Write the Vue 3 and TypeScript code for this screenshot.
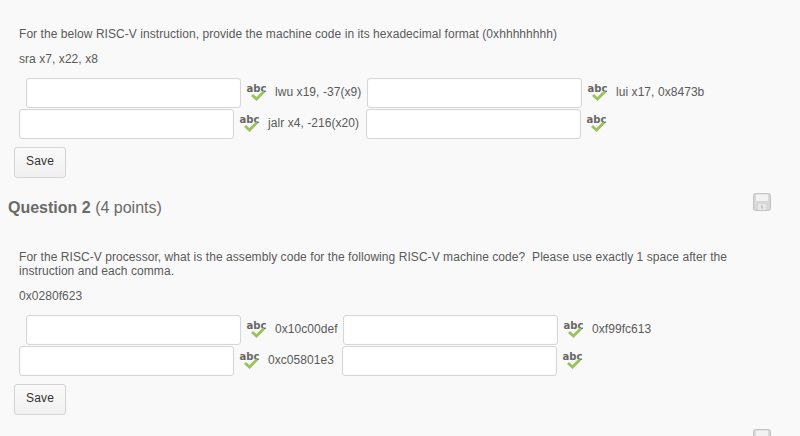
<script setup lang="ts">
interface Field {
  label?: string
  gap: number
}

interface Question {
  text: string[]
  code: string
  rows: { pad: number; fields: Field[] }[]
}

const questions: Question[] = [
  {
    text: ['For the below RISC-V instruction, provide the machine code in its hexadecimal format (0xhhhhhhhh)'],
    code: 'sra x7, x22, x8',
    rows: [
      { pad: 26, fields: [{ label: 'lwu x19, -37(x9)', gap: 92 }, { label: 'lui x17, 0x8473b', gap: 0 }] },
      { pad: 19, fields: [{ label: 'jalr x4, -216(x20)', gap: 98 }, { gap: 0 }] },
    ],
  },
  {
    text: [
      'For the RISC-V processor, what is the assembly code for the following RISC-V machine code?\u00a0 Please use exactly 1 space after the',
      'instruction and each comma.',
    ],
    code: '0x0280f623',
    rows: [
      { pad: 26, fields: [{ label: '0x10c00def', gap: 68 }, { label: '0xf99fc613', gap: 0 }] },
      { pad: 19, fields: [{ label: '0xc05801e3', gap: 74 }, { gap: 0 }] },
    ],
  },
]
</script>

<template>
  <div class="page">
    <template v-for="(q, i) in questions" :key="i">
      <section class="question">
        <p class="prompt">
          <span v-for="line in q.text" :key="line" class="line">{{ line }}</span>
        </p>
        <p class="code">{{ q.code }}</p>
        <div class="answers">
          <div v-for="(row, r) in q.rows" :key="r" class="row" :style="{ paddingLeft: `${row.pad}px` }">
            <div v-for="(f, k) in row.fields" :key="k" class="field" :style="{ width: f.gap ? `${f.gap + 249}px` : 'auto' }">
              <input class="box" type="text" />
              <svg class="abc" width="20" height="20" viewBox="0 0 20 20">
                <text x="0.5" y="10" class="abc-text">abc</text>
                <path d="M6 13 L10.5 17 L18 9.5" fill="none" stroke="#9bc25b" stroke-width="3" />
              </svg>
              <span v-if="f.label" class="label">{{ f.label }}</span>
            </div>
          </div>
        </div>
        <button class="save" type="button">Save</button>
      </section>
      <header class="head" :class="{ last: i === 1 }">
        <h2 v-if="i === 0" class="title">Question 2 <span class="pts">(4 points)</span></h2>
        <svg class="floppy" width="18" height="18" viewBox="0 0 18 18">
          <rect x="0.5" y="0.5" width="17" height="17" rx="2" fill="#d8d8d8" stroke="#c2c2c2" />
          <rect x="3" y="1.5" width="12" height="6.5" fill="#f2f2f2" />
          <rect x="5" y="11" width="8" height="6" fill="#e8e8e8" />
          <rect x="8" y="12.5" width="2" height="3" fill="#c4c4c4" />
        </svg>
      </header>
    </template>
  </div>
</template>

<style>
html,
body {
  margin: 0;
  background: #f9f9f9;
}
</style>

<style scoped>
.page {
  width: 800px;
  height: 436px;
  overflow: hidden;
  background: #f9f9f9;
  color: #5a5a5a;
  font-family: "Liberation Sans", Arial, sans-serif;
  font-size: 12px;
  letter-spacing: 0.06px;
  padding-top: 27px;
  box-sizing: border-box;
}
.prompt {
  margin: 0 0 0 19px;
  line-height: 14px;
}
.line {
  display: block;
}
.code {
  margin: 11px 0 0 19px;
  line-height: 14px;
}
.answers {
  margin-top: 12px;
}
.row {
  display: flex;
  height: 31px;
  align-items: flex-start;
}
.field {
  display: flex;
  align-items: flex-start;
  flex: none;
}
.box {
  display: block;
  width: 215px;
  height: 30px;
  box-sizing: border-box;
  border: 1px solid #d6d6d6;
  border-radius: 3px;
  background: #fff;
  box-shadow: inset 0 0 2px rgba(0, 0, 0, 0.05);
  padding: 0;
  outline: 0;
}
.abc {
  flex: none;
  margin: 4px 0 0 5px;
  overflow: visible;
}
.abc-text {
  font: bold 10px "DejaVu Sans", sans-serif;
  fill: #666;
  letter-spacing: 0;
}
.label {
  margin: 7px 0 0 9px;
  line-height: 14px;
  white-space: nowrap;
}
.save {
  display: block;
  margin: 7px 0 0 14px;
  width: 52px;
  height: 31px;
  border: 1px solid #d4d4d4;
  border-radius: 3px;
  background: linear-gradient(#fafafa, #f0f0f0);
  color: #333;
  font: inherit;
  letter-spacing: 0.2px;
  padding: 0 0 3px;
}
.head {
  display: flex;
  align-items: center;
  justify-content: space-between;
  height: 32px;
  margin-top: 12px;
  margin-bottom: 28px;
  padding: 0 29px 0 8px;
}
.head.last {
  justify-content: flex-end;
  margin-top: 11px;
}
.title {
  margin: 4px 0 0;
  font-size: 16px;
  font-weight: bold;
  letter-spacing: 0;
  color: #6a6a6a;
}
.pts {
  font-weight: normal;
}
.floppy {
  flex: none;
  margin-top: -9px;
}
</style>
